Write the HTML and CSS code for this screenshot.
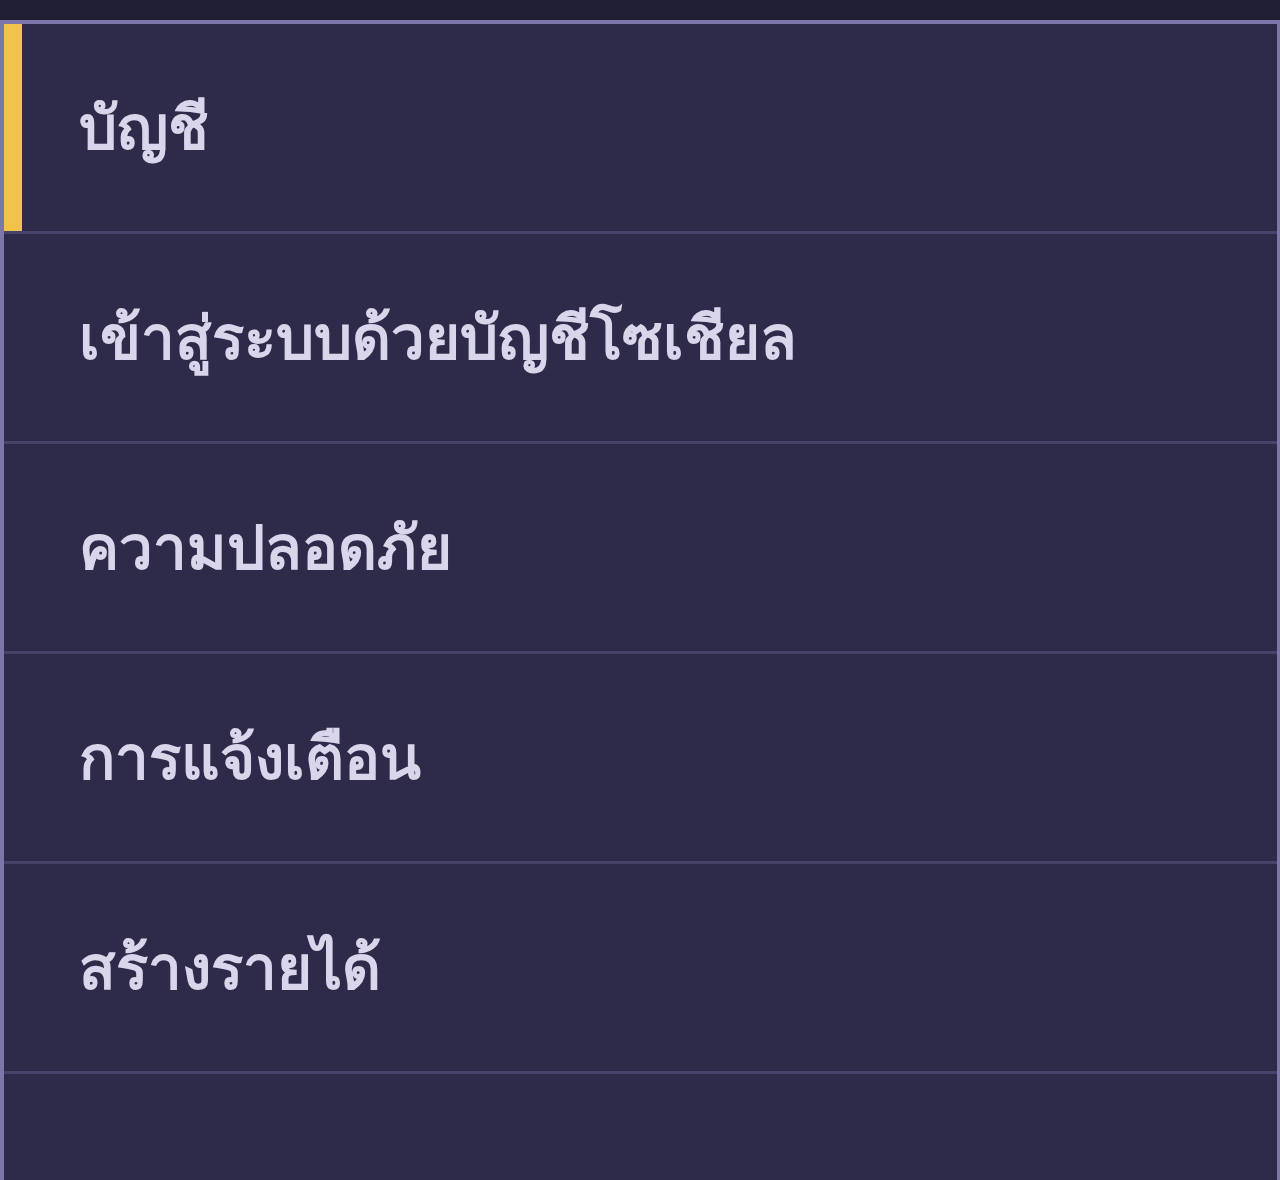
FILE: index.html
```html
<!DOCTYPE html>
<html lang="th">
<head>
<meta charset="utf-8">
<title>ตั้งค่า</title>
<link rel="stylesheet" href="styles.css">
</head>
<body>
<nav class="settings-nav">
  <a class="nav-item is-active" href="#">บัญชี</a>
  <a class="nav-item" href="#">เข้าสู่ระบบด้วยบัญชีโซเชียล</a>
  <a class="nav-item" href="#">ความปลอดภัย</a>
  <a class="nav-item" href="#">การแจ้งเตือน</a>
  <a class="nav-item" href="#">สร้างรายได้</a>
  <div class="nav-rest"></div>
</nav>
</body>
</html>
```

FILE: styles.css
```css
html, body {
  margin: 0;
  padding: 0;
}

body {
  background: #201e35;
  font-family: "Noto Sans", "Liberation Sans", sans-serif;
}

.settings-nav {
  box-sizing: border-box;
  margin-top: 20px;
  height: calc(100vh - 20px);
  background: #2d2a4a;
  border: 4px solid #7b77a9;
  border-bottom: 0;
  border-right-width: 3px;
  display: flex;
  flex-direction: column;
  overflow: hidden;
}

.nav-item {
  position: relative;
  display: flex;
  align-items: center;
  flex: 0 0 207px;
  padding-left: 75px;
  border-bottom: 3px solid #46436b;
  color: #d9d5ea;
  font-size: 60px;
  font-weight: 600;
  text-decoration: none;
}

.nav-rest {
  flex: 1 1 auto;
}

.nav-item.is-active::before {
  content: "";
  position: absolute;
  left: 0;
  top: 0;
  bottom: 0;
  width: 18px;
  background: #f1c34b;
}
```
